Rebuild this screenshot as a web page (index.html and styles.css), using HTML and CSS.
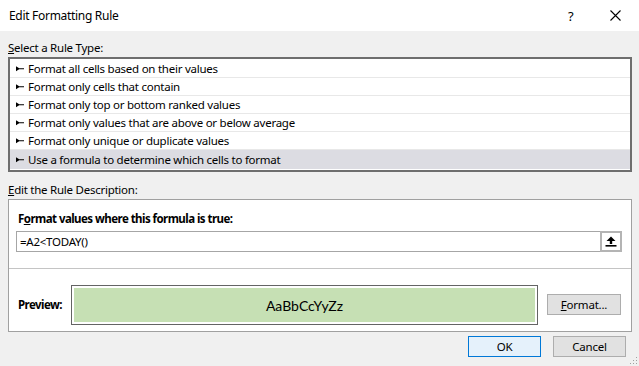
FILE: index.html
```html
<!DOCTYPE html>
<html lang="en">
<head>
<meta charset="utf-8">
<title>Edit Formatting Rule</title>
<link rel="stylesheet" href="styles.css">
</head>
<body>
<div class="dialog">
  <div class="titlebar">
    <span class="title">Edit Formatting Rule</span>
    <span class="help">?</span>
    <span class="close">
      <svg width="11" height="11" viewBox="0 0 11 11"><path d="M0.5 0.5 L10.5 10.5 M10.5 0.5 L0.5 10.5" stroke="#000" stroke-width="1.1" fill="none"/></svg>
    </span>
  </div>
  <div class="content">
    <div class="label lbl-type"><u>S</u>elect a Rule Type:</div>
    <ul class="rulelist">
      <li class="rule"><svg class="ptr" width="8" height="6" viewBox="0 0 8 6"><path d="M0 0.3 L3.2 2.3 L8 2.3 L8 3.3 L3.2 3.3 L0 5.3 Z" fill="#000"/></svg>Format all cells based on their values</li>
      <li class="rule"><svg class="ptr" width="8" height="6" viewBox="0 0 8 6"><path d="M0 0.3 L3.2 2.3 L8 2.3 L8 3.3 L3.2 3.3 L0 5.3 Z" fill="#000"/></svg>Format only cells that contain</li>
      <li class="rule"><svg class="ptr" width="8" height="6" viewBox="0 0 8 6"><path d="M0 0.3 L3.2 2.3 L8 2.3 L8 3.3 L3.2 3.3 L0 5.3 Z" fill="#000"/></svg>Format only top or bottom ranked values</li>
      <li class="rule"><svg class="ptr" width="8" height="6" viewBox="0 0 8 6"><path d="M0 0.3 L3.2 2.3 L8 2.3 L8 3.3 L3.2 3.3 L0 5.3 Z" fill="#000"/></svg>Format only values that are above or below average</li>
      <li class="rule"><svg class="ptr" width="8" height="6" viewBox="0 0 8 6"><path d="M0 0.3 L3.2 2.3 L8 2.3 L8 3.3 L3.2 3.3 L0 5.3 Z" fill="#000"/></svg>Format only unique or duplicate values</li>
      <li class="rule selected"><svg class="ptr" width="8" height="6" viewBox="0 0 8 6"><path d="M0 0.3 L3.2 2.3 L8 2.3 L8 3.3 L3.2 3.3 L0 5.3 Z" fill="#000"/></svg>Use a formula to determine which cells to format</li>
    </ul>
    <div class="label lbl-desc"><u>E</u>dit the Rule Description:</div>
    <div class="desc">
      <div class="desc-top">
        <div class="bold formula-label">F<u>o</u>rmat values where this formula is true:</div>
        <div class="formula">
          <div class="input">=A2&lt;TODAY()</div>
          <div class="refbtn">
            <svg width="12" height="12" viewBox="0 0 12 12">
              <path d="M6 0.5 L10.5 5 L7.2 5 L7.2 8 L4.8 8 L4.8 5 L1.5 5 Z" fill="#000"/>
              <rect x="0.5" y="9" width="11" height="1.6" fill="#000"/>
            </svg>
          </div>
        </div>
      </div>
      <div class="desc-bottom">
        <div class="bold preview-label">Preview:</div>
        <div class="preview"><div class="sample">AaBbCcYyZz</div></div>
        <button class="btn fmt"><u>F</u>ormat...</button>
      </div>
    </div>
    <div class="actions">
      <button class="btn ok">OK</button>
      <button class="btn cancel">Cancel</button>
    </div>
  </div>
  <svg class="grip" width="9" height="9" viewBox="0 0 9 9">
    <rect x="7" y="1" width="1" height="1" fill="#a0a0a0"/>
    <rect x="4" y="4" width="1" height="1" fill="#a0a0a0"/>
    <rect x="7" y="4" width="1" height="1" fill="#a0a0a0"/>
    <rect x="1" y="7" width="1" height="1" fill="#a0a0a0"/>
    <rect x="4" y="7" width="1" height="1" fill="#a0a0a0"/>
    <rect x="7" y="7" width="1" height="1" fill="#a0a0a0"/>
  </svg>
</div>
</body>
</html>
```
FILE: styles.css
```css
* { box-sizing: border-box; }
html, body { margin: 0; padding: 0; }
body {
  font-family: "Noto Sans", "Open Sans", sans-serif;
  font-size: 11.5px;
  letter-spacing: -0.25px;
  color: #000;
  background: #f0f0f0;
}
.dialog {
  position: relative;
  width: 639px;
  height: 366px;
  background: #f0f0f0;
  overflow: hidden;
}
.titlebar {
  height: 31px;
  background: #fff;
  display: flex;
  align-items: center;
  padding-left: 9px;
}
.title { flex: 1; line-height: 16px; padding-top: 1px; font-size: 12px; letter-spacing: -0.3px; }
.help { width: 41px; font-size: 13px; line-height: 16px; }
.close { width: 30px; display: flex; align-items: center; padding-left: 1px; }
.content {
  padding: 9px 7px 0 8px;
  display: flex;
  flex-direction: column;
}
.label { line-height: 16px; height: 16px; }
.lbl-type { margin-bottom: 1px; }
.lbl-desc { margin-top: 10px; margin-bottom: 1px; }
.rulelist {
  list-style: none;
  margin: 0;
  padding: 1px 0;
  border: 2px solid #6e6e6e;
  background: #fff;
}
.rule {
  height: 18px;
  border-bottom: 1px solid #e8e8e8;
  display: flex;
  align-items: center;
  padding-left: 6px;
  line-height: 16px;
}
.rule.selected {
  height: 19px;
  border-bottom: none;
  background: #dcdce2;
}
.ptr { margin-right: 4px; flex: none; }
.desc {
  border: 1px solid #a0a0a0;
  background: #fff;
  height: 133px;
  display: flex;
  flex-direction: column;
}
.desc-top {
  padding: 11px 9px 16px 7px;
  border-bottom: 1px solid #c4c4c4;
}
.bold { font-weight: bold; line-height: 16px; letter-spacing: -0.55px; }
.formula-label { padding-left: 2px; margin-bottom: 4px; }
.formula {
  display: flex;
  height: 21px;
}
.input {
  flex: 1;
  border: 1px solid #a6a6a6;
  border-right: none;
  line-height: 19px;
  padding-left: 3px;
}
.refbtn {
  width: 22px;
  border: 2px solid #b4b4b4;
  display: flex;
  align-items: center;
  justify-content: center;
  background: #fff;
}
.desc-bottom {
  flex: 1;
  display: flex;
  align-items: flex-start;
  padding: 16px 10px 0 9px;
}
.preview-label { margin-top: 12px; width: 53px; }
.preview {
  width: 467px;
  height: 40px;
  border: 1px solid #646464;
  padding: 2px;
  background: #fff;
}
.sample {
  height: 100%;
  background: #c6e0b4;
  display: flex;
  align-items: center;
  justify-content: center;
  font-family: "Lato", "Open Sans", sans-serif;
  font-size: 14px;
  letter-spacing: 0;
}
.btn {
  font-family: inherit;
  font-size: 11.5px;
  letter-spacing: -0.2px;
  color: #000;
  background: #e1e1e1;
  border: 1px solid #adadad;
  padding: 0;
  margin: 0;
  height: 21px;
  line-height: 18px;
}
.fmt { width: 74px; margin-left: 9px; margin-top: 9px; }
.actions {
  display: flex;
  justify-content: flex-end;
  gap: 12px;
  padding-right: 6px;
  margin-top: 4px;
}
.ok, .cancel { width: 73px; }
.ok { background: #e5f1fb; border-color: #0078d7; }
.grip { position: absolute; right: 1px; bottom: 1px; }
```
